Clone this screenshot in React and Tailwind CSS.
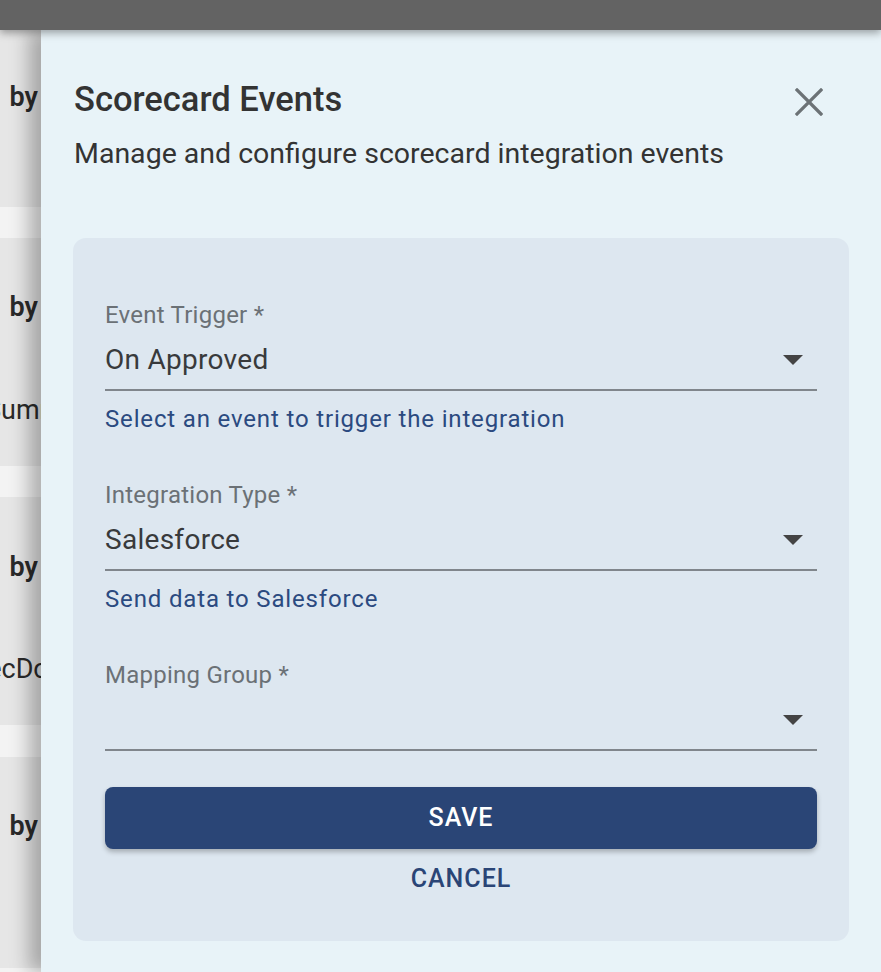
import React from 'react';

const BG_ROWS = [
    { h: 'h-[177px]', lines: [{ text: 'by', cls: 'pt-[52px] font-semibold justify-end' }] },
    { h: 'h-[31px]', band: true },
    { h: 'h-[228px]', lines: [{ text: 'by', cls: 'pt-[54px] font-semibold justify-end' }, { text: 'Summary', cls: 'pt-[73px] justify-start -ml-[15px]' }] },
    { h: 'h-[31px]', band: true },
    { h: 'h-[228px]', lines: [{ text: 'by', cls: 'pt-[55px] font-semibold justify-end' }, { text: 'SpecDocs', cls: 'pt-[72px] justify-start -ml-[44px]' }] },
    { h: 'h-[32px]', band: true },
    { h: 'h-[211px]', lines: [{ text: 'by', cls: 'pt-[54px] font-semibold justify-end' }] },
    { h: 'h-[31px]', band: true },
];

function Field({ label, value, helper }) {
    return (
        <div className="flex flex-col">
            <div className="h-[24px] leading-[24px] text-[24px] text-[#6b7176] tracking-[0.01em] whitespace-nowrap">{label}</div>
            <div className="h-[64px] flex items-start pt-[13px] justify-between border-b-2 border-[#80868c]">
                <span className="leading-[40px] text-[28px] text-[#383a3c] tracking-[0.01em]">{value}</span>
                <svg width="20" height="10" viewBox="0 0 20 10" className="mt-[15px] mr-[14px]">
                    <path d="M0 0 L20 0 L10 10 Z" fill="#444" />
                </svg>
            </div>
            {helper && (
                <div className="mt-[16px] h-[24px] leading-[24px] text-[24px] text-[#2b4a80] tracking-[0.035em] whitespace-nowrap">{helper}</div>
            )}
        </div>
    );
}

export default function App() {
    return (
        <div className="w-[881px] h-[972px] overflow-hidden flex flex-col font-['Roboto',sans-serif]">
            {/* top bar */}
            <div className="h-[30px] bg-[#636363] relative z-10 shadow-[0_3px_8px_rgba(0,0,0,0.35)] shrink-0"></div>

            <div className="flex flex-1 min-h-0">
                {/* page behind the drawer */}
                <div className="w-[41px] shrink-0 overflow-hidden flex flex-col bg-[#e6e6e6]">
                    {BG_ROWS.map((row, i) => (
                        <div key={i} className={`${row.h} shrink-0 ${row.band ? 'bg-[#f3f3f3]' : 'bg-[#e6e6e6]'} flex flex-col`}>
                            {row.lines && row.lines.map((l, j) => (
                                <div key={j} className={`flex whitespace-nowrap text-[27px] leading-[30px] text-[#2a2a2a] pr-[3px] ${l.cls}`}>
                                    {l.text}
                                </div>
                            ))}
                        </div>
                    ))}
                </div>

                {/* drawer */}
                <div className="flex-1 bg-[#e8f3f8] relative shadow-[-12px_0_18px_rgba(0,0,0,0.28)] flex flex-col px-[32px]">
                    <div className="flex items-start justify-between pl-[1px] pt-[49px]">
                        <h2 className="text-[34.5px] leading-[40px] font-medium text-[#333]">Scorecard Events</h2>
                        <button className="mt-[9px] mr-[26px]">
                            <svg width="28" height="28" viewBox="0 0 28 28">
                                <path d="M2 2 L26 26 M26 2 L2 26" stroke="#6c7276" strokeWidth="3.2" strokeLinecap="square" />
                            </svg>
                        </button>
                    </div>
                    <p className="pl-[1px] mt-[18px] text-[28.5px] leading-[34px] text-[#333]">
                        Manage and configure scorecard integration events
                    </p>

                    <div className="mt-[67px] bg-[#dde7f0] rounded-[13px] px-[32px] pt-[65px] pb-[50px] flex flex-col">
                        <Field label="Event Trigger *" value="On Approved" helper="Select an event to trigger the integration" />
                        <div className="mt-[52px]">
                            <Field label="Integration Type *" value="Salesforce" helper="Send data to Salesforce" />
                        </div>
                        <div className="mt-[52px]">
                            <Field label="Mapping Group *" value="" />
                        </div>
                        <button className="mt-[36px] h-[62px] rounded-[8px] bg-[#2a4576] text-white text-[25px] font-medium tracking-[0.04em] shadow-[0_3px_5px_rgba(0,0,0,0.25)]">
                            SAVE
                        </button>
                        <button className="mt-[18px] h-[24px] leading-[24px] text-[25px] font-medium tracking-[0.04em] text-[#2a4576]">
                            CANCEL
                        </button>
                    </div>
                </div>
            </div>
        </div>
    );
}
